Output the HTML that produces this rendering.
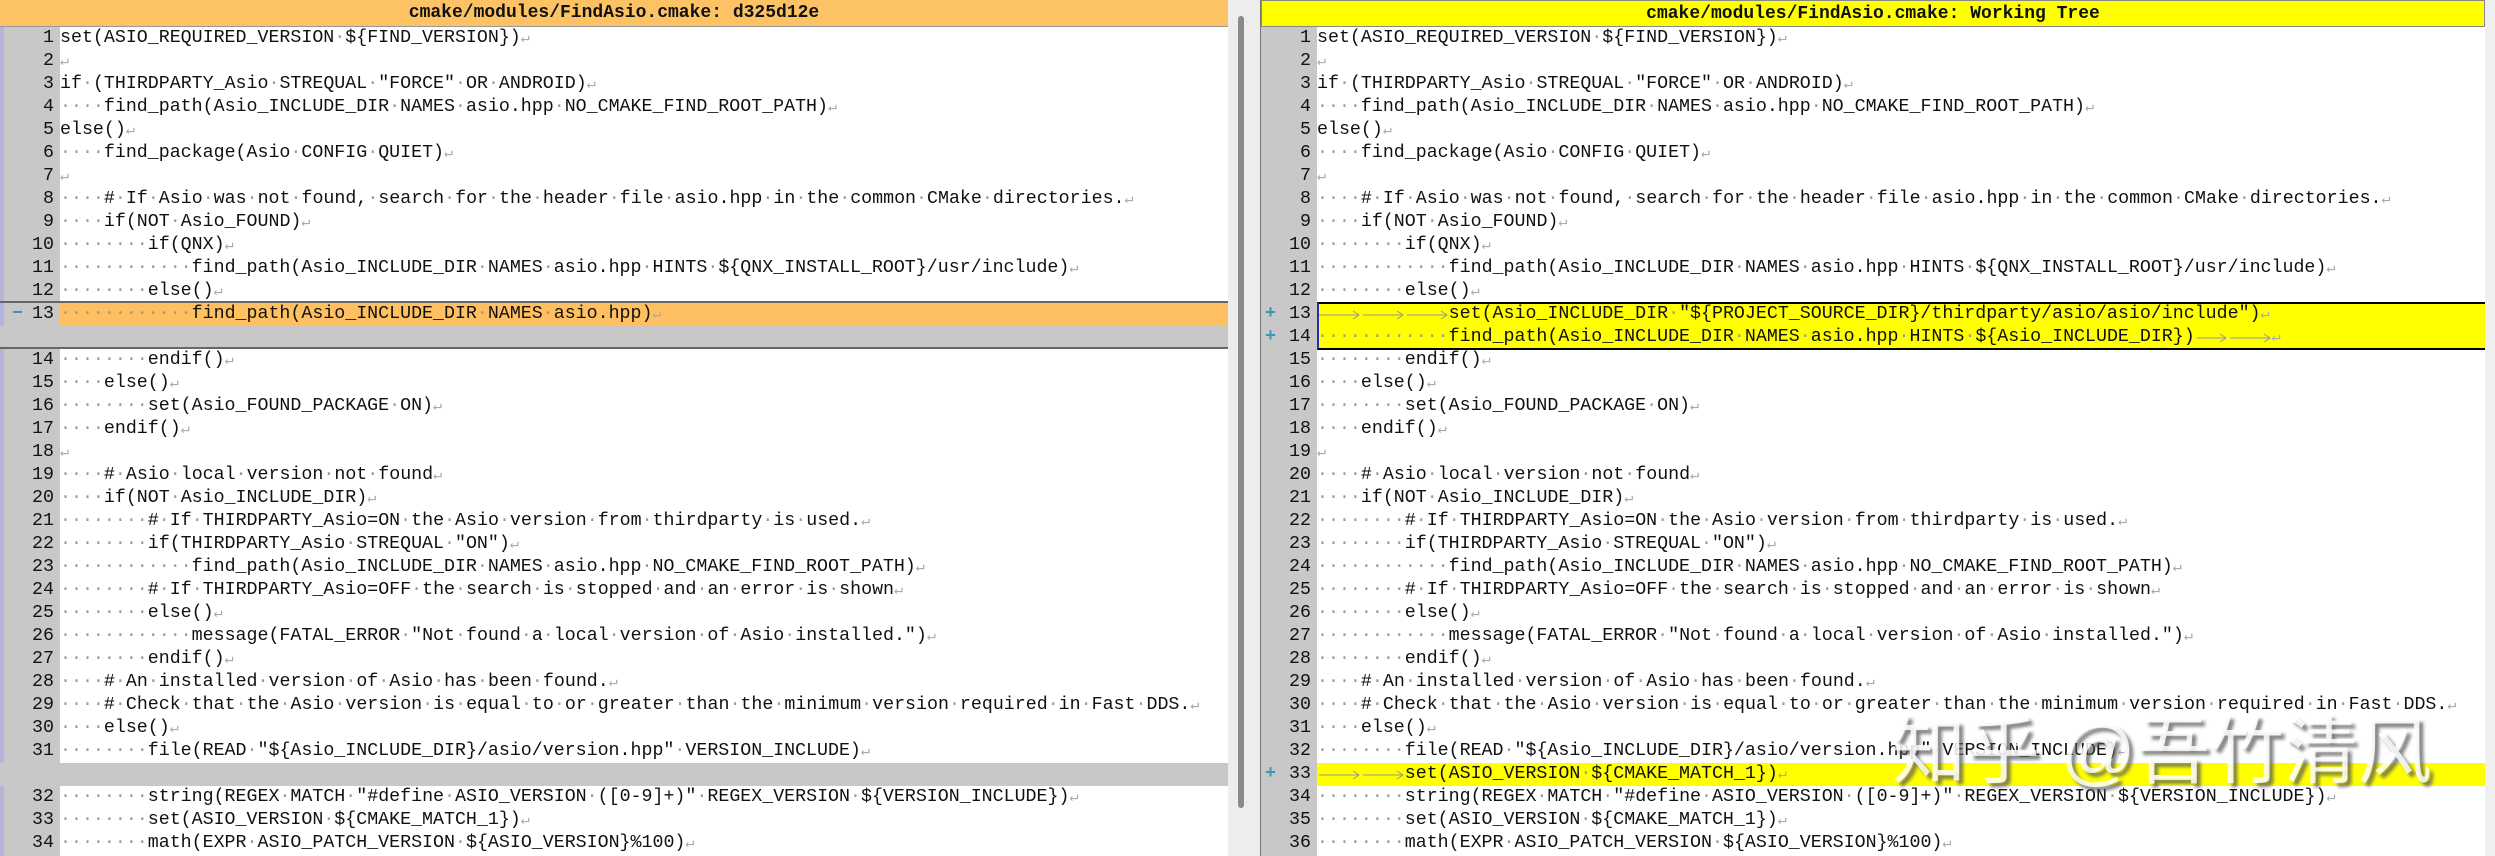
<!DOCTYPE html>
<html><head><meta charset="utf-8"><style>
*{margin:0;padding:0;box-sizing:border-box}
body{width:2495px;height:856px;overflow:hidden;background:#fff;font-family:"Liberation Mono",monospace;font-size:18.3px;position:relative}
.pane{position:absolute;top:0;height:856px;overflow:hidden;background:#fff}
.hdr{position:absolute;top:0;left:0;right:0;height:27px;border-bottom:1px solid #999;font-weight:bold;text-align:center;line-height:26px;font-size:18px;color:#111}
.gut{position:absolute;top:27px;bottom:0;background:#c8c8c8}
.rows{position:absolute;top:27px;left:0;right:0}
.r{height:23px;line-height:23px;white-space:pre;position:relative;color:#111}
.n{position:absolute;text-align:right;color:#111}
.t{position:absolute;top:0}
.d{color:#9a9a9a}
.e{color:#aaa;font-size:15px}
.m{position:absolute;color:#3a98b4;font-weight:bold}
.tab{display:inline-block;width:43.9px;height:23px;vertical-align:top}
.gap{background:#c8c8c8}
</style></head><body>

<div class="pane" style="left:0;width:1228px">
<div class="hdr" style="background:#fdc263">cmake/modules/FindAsio.cmake: d325d12e</div>
<div style="position:absolute;left:0;top:27px;bottom:0;width:4px;background:#b4b4dc"></div>
<div class="gut" style="left:4px;width:56px"></div>
<div class="rows" id="L">
<div class="r"><span class="n" style="left:0;width:54px">1</span><span class="t" style="left:60px">set(ASIO_REQUIRED_VERSION<span class=d>·</span>${FIND_VERSION})<span class=e>↵</span></span></div>
<div class="r"><span class="n" style="left:0;width:54px">2</span><span class="t" style="left:60px"><span class=e>↵</span></span></div>
<div class="r"><span class="n" style="left:0;width:54px">3</span><span class="t" style="left:60px">if<span class=d>·</span>(THIRDPARTY_Asio<span class=d>·</span>STREQUAL<span class=d>·</span>"FORCE"<span class=d>·</span>OR<span class=d>·</span>ANDROID)<span class=e>↵</span></span></div>
<div class="r"><span class="n" style="left:0;width:54px">4</span><span class="t" style="left:60px"><span class=d>····</span>find_path(Asio_INCLUDE_DIR<span class=d>·</span>NAMES<span class=d>·</span>asio.hpp<span class=d>·</span>NO_CMAKE_FIND_ROOT_PATH)<span class=e>↵</span></span></div>
<div class="r"><span class="n" style="left:0;width:54px">5</span><span class="t" style="left:60px">else()<span class=e>↵</span></span></div>
<div class="r"><span class="n" style="left:0;width:54px">6</span><span class="t" style="left:60px"><span class=d>····</span>find_package(Asio<span class=d>·</span>CONFIG<span class=d>·</span>QUIET)<span class=e>↵</span></span></div>
<div class="r"><span class="n" style="left:0;width:54px">7</span><span class="t" style="left:60px"><span class=e>↵</span></span></div>
<div class="r"><span class="n" style="left:0;width:54px">8</span><span class="t" style="left:60px"><span class=d>····</span>#<span class=d>·</span>If<span class=d>·</span>Asio<span class=d>·</span>was<span class=d>·</span>not<span class=d>·</span>found,<span class=d>·</span>search<span class=d>·</span>for<span class=d>·</span>the<span class=d>·</span>header<span class=d>·</span>file<span class=d>·</span>asio.hpp<span class=d>·</span>in<span class=d>·</span>the<span class=d>·</span>common<span class=d>·</span>CMake<span class=d>·</span>directories.<span class=e>↵</span></span></div>
<div class="r"><span class="n" style="left:0;width:54px">9</span><span class="t" style="left:60px"><span class=d>····</span>if(NOT<span class=d>·</span>Asio_FOUND)<span class=e>↵</span></span></div>
<div class="r"><span class="n" style="left:0;width:54px">10</span><span class="t" style="left:60px"><span class=d>········</span>if(QNX)<span class=e>↵</span></span></div>
<div class="r"><span class="n" style="left:0;width:54px">11</span><span class="t" style="left:60px"><span class=d>············</span>find_path(Asio_INCLUDE_DIR<span class=d>·</span>NAMES<span class=d>·</span>asio.hpp<span class=d>·</span>HINTS<span class=d>·</span>${QNX_INSTALL_ROOT}/usr/include)<span class=e>↵</span></span></div>
<div class="r"><span class="n" style="left:0;width:54px">12</span><span class="t" style="left:60px"><span class=d>········</span>else()<span class=e>↵</span></span></div>
<div class="r" style="border-top:2px solid #666;margin-top:-2px;height:25px"><div style="position:absolute;left:60px;right:0;top:0;bottom:0;background:#ffc062"></div><span class="m" style="left:12px">−</span><span class="n" style="left:0;width:54px">13</span><span class="t" style="left:60px"><span class=d>············</span>find_path(Asio_INCLUDE_DIR<span class=d>·</span>NAMES<span class=d>·</span>asio.hpp)<span class=e>↵</span></span></div>
<div class="r gap" style="border-bottom:2px solid #666"></div>
<div class="r"><span class="n" style="left:0;width:54px">14</span><span class="t" style="left:60px"><span class=d>········</span>endif()<span class=e>↵</span></span></div>
<div class="r"><span class="n" style="left:0;width:54px">15</span><span class="t" style="left:60px"><span class=d>····</span>else()<span class=e>↵</span></span></div>
<div class="r"><span class="n" style="left:0;width:54px">16</span><span class="t" style="left:60px"><span class=d>········</span>set(Asio_FOUND_PACKAGE<span class=d>·</span>ON)<span class=e>↵</span></span></div>
<div class="r"><span class="n" style="left:0;width:54px">17</span><span class="t" style="left:60px"><span class=d>····</span>endif()<span class=e>↵</span></span></div>
<div class="r"><span class="n" style="left:0;width:54px">18</span><span class="t" style="left:60px"><span class=e>↵</span></span></div>
<div class="r"><span class="n" style="left:0;width:54px">19</span><span class="t" style="left:60px"><span class=d>····</span>#<span class=d>·</span>Asio<span class=d>·</span>local<span class=d>·</span>version<span class=d>·</span>not<span class=d>·</span>found<span class=e>↵</span></span></div>
<div class="r"><span class="n" style="left:0;width:54px">20</span><span class="t" style="left:60px"><span class=d>····</span>if(NOT<span class=d>·</span>Asio_INCLUDE_DIR)<span class=e>↵</span></span></div>
<div class="r"><span class="n" style="left:0;width:54px">21</span><span class="t" style="left:60px"><span class=d>········</span>#<span class=d>·</span>If<span class=d>·</span>THIRDPARTY_Asio=ON<span class=d>·</span>the<span class=d>·</span>Asio<span class=d>·</span>version<span class=d>·</span>from<span class=d>·</span>thirdparty<span class=d>·</span>is<span class=d>·</span>used.<span class=e>↵</span></span></div>
<div class="r"><span class="n" style="left:0;width:54px">22</span><span class="t" style="left:60px"><span class=d>········</span>if(THIRDPARTY_Asio<span class=d>·</span>STREQUAL<span class=d>·</span>"ON")<span class=e>↵</span></span></div>
<div class="r"><span class="n" style="left:0;width:54px">23</span><span class="t" style="left:60px"><span class=d>············</span>find_path(Asio_INCLUDE_DIR<span class=d>·</span>NAMES<span class=d>·</span>asio.hpp<span class=d>·</span>NO_CMAKE_FIND_ROOT_PATH)<span class=e>↵</span></span></div>
<div class="r"><span class="n" style="left:0;width:54px">24</span><span class="t" style="left:60px"><span class=d>········</span>#<span class=d>·</span>If<span class=d>·</span>THIRDPARTY_Asio=OFF<span class=d>·</span>the<span class=d>·</span>search<span class=d>·</span>is<span class=d>·</span>stopped<span class=d>·</span>and<span class=d>·</span>an<span class=d>·</span>error<span class=d>·</span>is<span class=d>·</span>shown<span class=e>↵</span></span></div>
<div class="r"><span class="n" style="left:0;width:54px">25</span><span class="t" style="left:60px"><span class=d>········</span>else()<span class=e>↵</span></span></div>
<div class="r"><span class="n" style="left:0;width:54px">26</span><span class="t" style="left:60px"><span class=d>············</span>message(FATAL_ERROR<span class=d>·</span>"Not<span class=d>·</span>found<span class=d>·</span>a<span class=d>·</span>local<span class=d>·</span>version<span class=d>·</span>of<span class=d>·</span>Asio<span class=d>·</span>installed.")<span class=e>↵</span></span></div>
<div class="r"><span class="n" style="left:0;width:54px">27</span><span class="t" style="left:60px"><span class=d>········</span>endif()<span class=e>↵</span></span></div>
<div class="r"><span class="n" style="left:0;width:54px">28</span><span class="t" style="left:60px"><span class=d>····</span>#<span class=d>·</span>An<span class=d>·</span>installed<span class=d>·</span>version<span class=d>·</span>of<span class=d>·</span>Asio<span class=d>·</span>has<span class=d>·</span>been<span class=d>·</span>found.<span class=e>↵</span></span></div>
<div class="r"><span class="n" style="left:0;width:54px">29</span><span class="t" style="left:60px"><span class=d>····</span>#<span class=d>·</span>Check<span class=d>·</span>that<span class=d>·</span>the<span class=d>·</span>Asio<span class=d>·</span>version<span class=d>·</span>is<span class=d>·</span>equal<span class=d>·</span>to<span class=d>·</span>or<span class=d>·</span>greater<span class=d>·</span>than<span class=d>·</span>the<span class=d>·</span>minimum<span class=d>·</span>version<span class=d>·</span>required<span class=d>·</span>in<span class=d>·</span>Fast<span class=d>·</span>DDS.<span class=e>↵</span></span></div>
<div class="r"><span class="n" style="left:0;width:54px">30</span><span class="t" style="left:60px"><span class=d>····</span>else()<span class=e>↵</span></span></div>
<div class="r"><span class="n" style="left:0;width:54px">31</span><span class="t" style="left:60px"><span class=d>········</span>file(READ<span class=d>·</span>"${Asio_INCLUDE_DIR}/asio/version.hpp"<span class=d>·</span>VERSION_INCLUDE)<span class=e>↵</span></span></div>
<div class="r gap"></div>
<div class="r"><span class="n" style="left:0;width:54px">32</span><span class="t" style="left:60px"><span class=d>········</span>string(REGEX<span class=d>·</span>MATCH<span class=d>·</span>"#define<span class=d>·</span>ASIO_VERSION<span class=d>·</span>([0-9]+)"<span class=d>·</span>REGEX_VERSION<span class=d>·</span>${VERSION_INCLUDE})<span class=e>↵</span></span></div>
<div class="r"><span class="n" style="left:0;width:54px">33</span><span class="t" style="left:60px"><span class=d>········</span>set(ASIO_VERSION<span class=d>·</span>${CMAKE_MATCH_1})<span class=e>↵</span></span></div>
<div class="r"><span class="n" style="left:0;width:54px">34</span><span class="t" style="left:60px"><span class=d>········</span>math(EXPR<span class=d>·</span>ASIO_PATCH_VERSION<span class=d>·</span>${ASIO_VERSION}%100)<span class=e>↵</span></span></div>
</div>
</div>

<div style="position:absolute;left:1228px;top:0;width:32px;height:856px;background:#ededed"></div>
<div style="position:absolute;left:1238px;top:16px;width:6px;height:792px;background:#8a8a8a;border-radius:3px"></div>

<div class="pane" style="left:1260px;width:1225px;border-left:1px solid #777">
<div class="hdr" style="background:#ffff00;border:1px solid #888">cmake/modules/FindAsio.cmake: Working Tree</div>
<div class="gut" style="left:0;width:56px"></div>
<div class="rows">
<div class="r"><span class="n" style="left:0;width:50px">1</span><span class="t" style="left:56px">set(ASIO_REQUIRED_VERSION<span class=d>·</span>${FIND_VERSION})<span class=e>↵</span></span></div>
<div class="r"><span class="n" style="left:0;width:50px">2</span><span class="t" style="left:56px"><span class=e>↵</span></span></div>
<div class="r"><span class="n" style="left:0;width:50px">3</span><span class="t" style="left:56px">if<span class=d>·</span>(THIRDPARTY_Asio<span class=d>·</span>STREQUAL<span class=d>·</span>"FORCE"<span class=d>·</span>OR<span class=d>·</span>ANDROID)<span class=e>↵</span></span></div>
<div class="r"><span class="n" style="left:0;width:50px">4</span><span class="t" style="left:56px"><span class=d>····</span>find_path(Asio_INCLUDE_DIR<span class=d>·</span>NAMES<span class=d>·</span>asio.hpp<span class=d>·</span>NO_CMAKE_FIND_ROOT_PATH)<span class=e>↵</span></span></div>
<div class="r"><span class="n" style="left:0;width:50px">5</span><span class="t" style="left:56px">else()<span class=e>↵</span></span></div>
<div class="r"><span class="n" style="left:0;width:50px">6</span><span class="t" style="left:56px"><span class=d>····</span>find_package(Asio<span class=d>·</span>CONFIG<span class=d>·</span>QUIET)<span class=e>↵</span></span></div>
<div class="r"><span class="n" style="left:0;width:50px">7</span><span class="t" style="left:56px"><span class=e>↵</span></span></div>
<div class="r"><span class="n" style="left:0;width:50px">8</span><span class="t" style="left:56px"><span class=d>····</span>#<span class=d>·</span>If<span class=d>·</span>Asio<span class=d>·</span>was<span class=d>·</span>not<span class=d>·</span>found,<span class=d>·</span>search<span class=d>·</span>for<span class=d>·</span>the<span class=d>·</span>header<span class=d>·</span>file<span class=d>·</span>asio.hpp<span class=d>·</span>in<span class=d>·</span>the<span class=d>·</span>common<span class=d>·</span>CMake<span class=d>·</span>directories.<span class=e>↵</span></span></div>
<div class="r"><span class="n" style="left:0;width:50px">9</span><span class="t" style="left:56px"><span class=d>····</span>if(NOT<span class=d>·</span>Asio_FOUND)<span class=e>↵</span></span></div>
<div class="r"><span class="n" style="left:0;width:50px">10</span><span class="t" style="left:56px"><span class=d>········</span>if(QNX)<span class=e>↵</span></span></div>
<div class="r"><span class="n" style="left:0;width:50px">11</span><span class="t" style="left:56px"><span class=d>············</span>find_path(Asio_INCLUDE_DIR<span class=d>·</span>NAMES<span class=d>·</span>asio.hpp<span class=d>·</span>HINTS<span class=d>·</span>${QNX_INSTALL_ROOT}/usr/include)<span class=e>↵</span></span></div>
<div class="r"><span class="n" style="left:0;width:50px">12</span><span class="t" style="left:56px"><span class=d>········</span>else()<span class=e>↵</span></span></div>
<div style="position:relative;height:46px">
<div style="position:absolute;left:56px;right:0;top:-1px;height:48px;background:#ffff00;border-top:2px solid #000;border-bottom:2px solid #000;border-left:2px solid #2233aa"></div>
<div class="r"><span class="m" style="left:4px">+</span><span class="n" style="left:0;width:50px">13</span><span class="t" style="left:56px"><span class=tab><svg width="44" height="23"><path d="M2 12H42M36 8L42 12L36 16" stroke="#999" fill="none"/></svg></span><span class=tab><svg width="44" height="23"><path d="M2 12H42M36 8L42 12L36 16" stroke="#999" fill="none"/></svg></span><span class=tab><svg width="44" height="23"><path d="M2 12H42M36 8L42 12L36 16" stroke="#999" fill="none"/></svg></span>set(Asio_INCLUDE_DIR<span class=d>·</span>"${PROJECT_SOURCE_DIR}/thirdparty/asio/asio/include")<span class=e>↵</span></span></div>
<div class="r"><span class="m" style="left:4px">+</span><span class="n" style="left:0;width:50px">14</span><span class="t" style="left:56px"><span class=d>············</span>find_path(Asio_INCLUDE_DIR<span class=d>·</span>NAMES<span class=d>·</span>asio.hpp<span class=d>·</span>HINTS<span class=d>·</span>${Asio_INCLUDE_DIR})<span class=tab style="width:33px"><svg width="33" height="23"><path d="M2 12H31M25 8L31 12L25 16" stroke="#999" fill="none"/></svg></span><span class=tab><svg width="44" height="23"><path d="M2 12H42M36 8L42 12L36 16" stroke="#999" fill="none"/></svg></span><span class=e>↵</span></span></div>
</div>
<div class="r"><span class="n" style="left:0;width:50px">15</span><span class="t" style="left:56px"><span class=d>········</span>endif()<span class=e>↵</span></span></div>
<div class="r"><span class="n" style="left:0;width:50px">16</span><span class="t" style="left:56px"><span class=d>····</span>else()<span class=e>↵</span></span></div>
<div class="r"><span class="n" style="left:0;width:50px">17</span><span class="t" style="left:56px"><span class=d>········</span>set(Asio_FOUND_PACKAGE<span class=d>·</span>ON)<span class=e>↵</span></span></div>
<div class="r"><span class="n" style="left:0;width:50px">18</span><span class="t" style="left:56px"><span class=d>····</span>endif()<span class=e>↵</span></span></div>
<div class="r"><span class="n" style="left:0;width:50px">19</span><span class="t" style="left:56px"><span class=e>↵</span></span></div>
<div class="r"><span class="n" style="left:0;width:50px">20</span><span class="t" style="left:56px"><span class=d>····</span>#<span class=d>·</span>Asio<span class=d>·</span>local<span class=d>·</span>version<span class=d>·</span>not<span class=d>·</span>found<span class=e>↵</span></span></div>
<div class="r"><span class="n" style="left:0;width:50px">21</span><span class="t" style="left:56px"><span class=d>····</span>if(NOT<span class=d>·</span>Asio_INCLUDE_DIR)<span class=e>↵</span></span></div>
<div class="r"><span class="n" style="left:0;width:50px">22</span><span class="t" style="left:56px"><span class=d>········</span>#<span class=d>·</span>If<span class=d>·</span>THIRDPARTY_Asio=ON<span class=d>·</span>the<span class=d>·</span>Asio<span class=d>·</span>version<span class=d>·</span>from<span class=d>·</span>thirdparty<span class=d>·</span>is<span class=d>·</span>used.<span class=e>↵</span></span></div>
<div class="r"><span class="n" style="left:0;width:50px">23</span><span class="t" style="left:56px"><span class=d>········</span>if(THIRDPARTY_Asio<span class=d>·</span>STREQUAL<span class=d>·</span>"ON")<span class=e>↵</span></span></div>
<div class="r"><span class="n" style="left:0;width:50px">24</span><span class="t" style="left:56px"><span class=d>············</span>find_path(Asio_INCLUDE_DIR<span class=d>·</span>NAMES<span class=d>·</span>asio.hpp<span class=d>·</span>NO_CMAKE_FIND_ROOT_PATH)<span class=e>↵</span></span></div>
<div class="r"><span class="n" style="left:0;width:50px">25</span><span class="t" style="left:56px"><span class=d>········</span>#<span class=d>·</span>If<span class=d>·</span>THIRDPARTY_Asio=OFF<span class=d>·</span>the<span class=d>·</span>search<span class=d>·</span>is<span class=d>·</span>stopped<span class=d>·</span>and<span class=d>·</span>an<span class=d>·</span>error<span class=d>·</span>is<span class=d>·</span>shown<span class=e>↵</span></span></div>
<div class="r"><span class="n" style="left:0;width:50px">26</span><span class="t" style="left:56px"><span class=d>········</span>else()<span class=e>↵</span></span></div>
<div class="r"><span class="n" style="left:0;width:50px">27</span><span class="t" style="left:56px"><span class=d>············</span>message(FATAL_ERROR<span class=d>·</span>"Not<span class=d>·</span>found<span class=d>·</span>a<span class=d>·</span>local<span class=d>·</span>version<span class=d>·</span>of<span class=d>·</span>Asio<span class=d>·</span>installed.")<span class=e>↵</span></span></div>
<div class="r"><span class="n" style="left:0;width:50px">28</span><span class="t" style="left:56px"><span class=d>········</span>endif()<span class=e>↵</span></span></div>
<div class="r"><span class="n" style="left:0;width:50px">29</span><span class="t" style="left:56px"><span class=d>····</span>#<span class=d>·</span>An<span class=d>·</span>installed<span class=d>·</span>version<span class=d>·</span>of<span class=d>·</span>Asio<span class=d>·</span>has<span class=d>·</span>been<span class=d>·</span>found.<span class=e>↵</span></span></div>
<div class="r"><span class="n" style="left:0;width:50px">30</span><span class="t" style="left:56px"><span class=d>····</span>#<span class=d>·</span>Check<span class=d>·</span>that<span class=d>·</span>the<span class=d>·</span>Asio<span class=d>·</span>version<span class=d>·</span>is<span class=d>·</span>equal<span class=d>·</span>to<span class=d>·</span>or<span class=d>·</span>greater<span class=d>·</span>than<span class=d>·</span>the<span class=d>·</span>minimum<span class=d>·</span>version<span class=d>·</span>required<span class=d>·</span>in<span class=d>·</span>Fast<span class=d>·</span>DDS.<span class=e>↵</span></span></div>
<div class="r"><span class="n" style="left:0;width:50px">31</span><span class="t" style="left:56px"><span class=d>····</span>else()<span class=e>↵</span></span></div>
<div class="r"><span class="n" style="left:0;width:50px">32</span><span class="t" style="left:56px"><span class=d>········</span>file(READ<span class=d>·</span>"${Asio_INCLUDE_DIR}/asio/version.hpp"<span class=d>·</span>VERSION_INCLUDE)<span class=e>↵</span></span></div>
<div class="r"><div style="position:absolute;left:56px;right:0;top:0;bottom:0;background:#ffff00"></div><span class="m" style="left:4px">+</span><span class="n" style="left:0;width:50px">33</span><span class="t" style="left:56px"><span class=tab><svg width="44" height="23"><path d="M2 12H42M36 8L42 12L36 16" stroke="#999" fill="none"/></svg></span><span class=tab><svg width="44" height="23"><path d="M2 12H42M36 8L42 12L36 16" stroke="#999" fill="none"/></svg></span>set(ASIO_VERSION<span class=d>·</span>${CMAKE_MATCH_1})<span class=e>↵</span></span></div>
<div class="r"><span class="n" style="left:0;width:50px">34</span><span class="t" style="left:56px"><span class=d>········</span>string(REGEX<span class=d>·</span>MATCH<span class=d>·</span>"#define<span class=d>·</span>ASIO_VERSION<span class=d>·</span>([0-9]+)"<span class=d>·</span>REGEX_VERSION<span class=d>·</span>${VERSION_INCLUDE})<span class=e>↵</span></span></div>
<div class="r"><span class="n" style="left:0;width:50px">35</span><span class="t" style="left:56px"><span class=d>········</span>set(ASIO_VERSION<span class=d>·</span>${CMAKE_MATCH_1})<span class=e>↵</span></span></div>
<div class="r"><span class="n" style="left:0;width:50px">36</span><span class="t" style="left:56px"><span class=d>········</span>math(EXPR<span class=d>·</span>ASIO_PATCH_VERSION<span class=d>·</span>${ASIO_VERSION}%100)<span class=e>↵</span></span></div>
</div>
</div>
<div style="position:absolute;left:2485px;top:0;width:10px;height:856px;background:#efefef"></div>

<div style="position:absolute;left:1892px;top:704px;font-family:'Liberation Sans','Noto Sans CJK SC',sans-serif;font-size:74px;line-height:96px;color:rgba(255,255,255,0.85);text-shadow:4px 4px 3px rgba(90,90,90,0.75);white-space:nowrap">知乎 @吾竹清风</div>
</body></html>
